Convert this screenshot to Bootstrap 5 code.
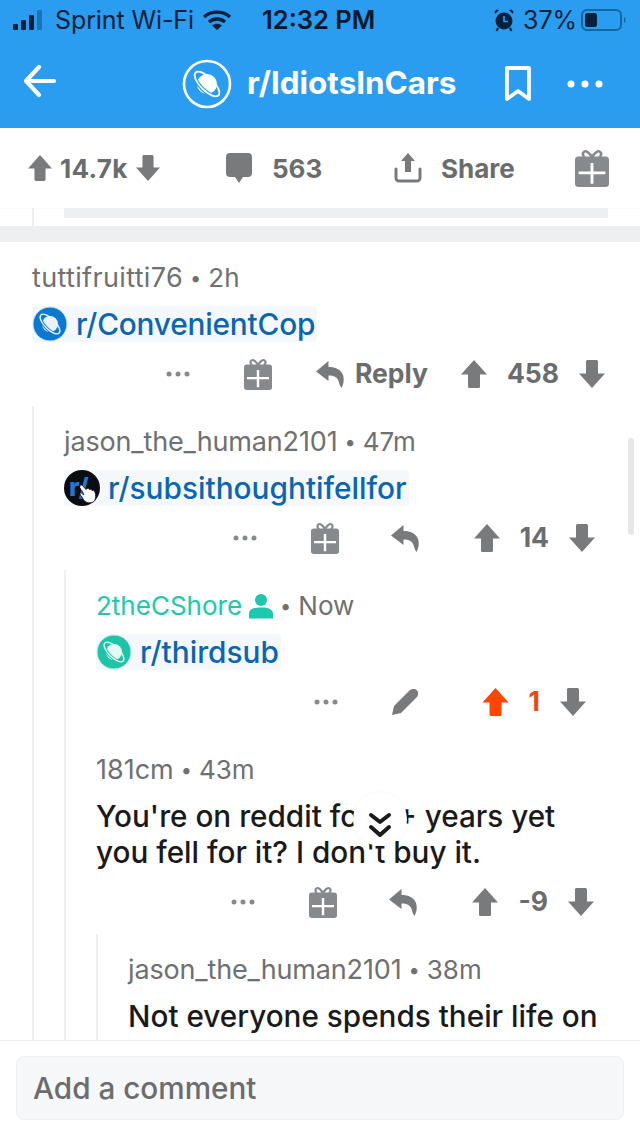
<!DOCTYPE html>
<html lang="en">
<head>
<meta charset="utf-8">
<title>r/IdiotsInCars</title>
<link href="https://cdn.jsdelivr.net/npm/bootstrap@5.3.0/dist/css/bootstrap.min.css" rel="stylesheet">
<style>
html,body{margin:0;height:1136px;overflow:hidden;background:#fff}
body{font-family:Inter,"Noto Sans",sans-serif;color:#1a1a1b}
.shell{width:640px;height:1136px;position:relative;overflow:hidden}
.hero{background:#2a9df0;height:128px;flex:none}
.status{height:40px;padding:0 0 0 13px;font-size:25px;color:#07213a;line-height:40px}
.status svg{flex:none}
.status .carrier{margin-left:8px;width:139px;white-space:nowrap;letter-spacing:-.1px}
.status .wifi{margin-left:8px}
.status .clock{font-weight:600;margin-left:30px;width:119px;white-space:nowrap;color:#04182c;font-size:25.5px}
.status .alarm{margin-left:113px}
.status .pct{margin-left:9px;white-space:nowrap;width:51px}
.status .batt{margin-left:7px}
.topnav{height:88px;color:#fff;position:relative}
.topnav svg{flex:none}
.topnav .back{margin-left:23px;margin-bottom:6px}
.topnav .subname{font-size:31.4px;font-weight:700;margin-left:15px;width:224px;white-space:nowrap}
.topnav .planet{margin-left:125px}
.topnav .bm{margin-left:34px}
.topnav .more{margin-left:36px}
.postbar{height:80px;flex:none;color:#6a6c6e;font-size:26px;font-weight:700;box-shadow:0 1px 1px rgba(0,0,0,.02)}
.postbar svg{flex:none}
.postbar .pb-score{width:69px;margin:0 7px 0 8px;white-space:nowrap;letter-spacing:.3px}
.postbar .pb-up{margin-left:28px}
.postbar .pb-cm{margin-left:66px}
.postbar .pb-num{margin-left:20px;width:50px}
.postbar .pb-sh{margin-left:72px}
.postbar .pb-txt{margin-left:19px;width:74px}
.postbar .pb-gift{margin-left:60px}
.scroller{flex:1 1 auto;overflow:hidden;min-height:0}
.stub{height:18px;margin-left:32px;border-left:2px solid #edeff1;padding-left:30px}
.stub-bar{height:10px;width:544px;background:#edeff1}
.sep{height:16px;background:#edeff1}
.meta{height:32px;line-height:32px;font-size:27px;color:#6e7071;white-space:nowrap;display:flex;align-items:center}
.meta .dot{margin:0 7px;font-size:20px}
.meta .tm{font-size:26px}
.meta .uname-j{letter-spacing:-.15px}
.meta .uname-t{letter-spacing:.35px}
.meta .op{color:#1cc9ac;font-size:26px}
.meta svg{margin-left:6px;flex:none}
.meta .dot.tight{margin-left:6px;margin-right:7px}
.sublink{display:inline-flex;align-items:center;height:36px;background:#f5f8fa;margin-top:12px;color:#0a66b2;font-size:29.8px;font-weight:500;padding-right:2px;white-space:nowrap;border-radius:3px;vertical-align:top}
.sublink.tight-name{letter-spacing:-.2px}
.sublink svg{margin-right:8px;flex:none}
.linkrow{height:40px}
.txt{font-size:29.7px;font-weight:500;line-height:36px;margin-top:12px;color:#1a1a1b;white-space:nowrap}
.acts{height:40px;display:flex;align-items:center;justify-content:flex-end;color:#6a6c6e;font-size:26.5px;font-weight:700;margin-top:20px}
.acts.close-up{margin-top:12px}
.acts svg{flex:none}
.acts .a-dots{margin-right:54px}
.acts .a-gift{margin-right:44px}
.acts .a-gift.wide{margin-right:52px}
.acts .a-reply{display:flex;align-items:center;gap:11px}
.acts .a-vote{display:flex;align-items:center;gap:20px;margin-left:55px}
.acts .a-vote.first{margin-left:33px}
.acts .a-vote.pen{margin-left:64px}
.acts .cnt{white-space:nowrap;text-align:center}
.acts .cnt.down{color:#ea4a12}
.r-1{padding-right:35px}
.r-2{padding-right:45px}
.r-3{padding-right:54px}
.r-4{padding-right:46px}
.lvl0{padding:20px 0 0 32px}
.nest{border-left:2px solid #edeff1;padding-left:30px;margin-top:12px;padding-top:20px}
.nest.n-1{margin-left:32px}
.sib{margin-top:32px}
.add-wrap{height:96px;flex:none;border-top:1px solid #edeff1;padding:15px 16px 16px;background:#fff}
.add-box{height:64px;background:#f6f7f8;border:1px solid #f0f1f2;border-radius:8px;font-size:29.7px;font-weight:500;color:#6a6c6e;line-height:62px;padding-left:16px}
.fab{position:absolute;left:353px;top:793px;width:54px;height:53px;border-radius:50%;background:#fff;box-shadow:0 0 6px rgba(0,0,0,.04);display:flex;align-items:center;justify-content:center;padding-top:10px}
.rail{position:absolute;left:628px;top:438px;width:6px;height:97px;border-radius:3px;background:#e6e7e8}
.pl-blue{--pf:#eaf3fb;--pb:#0a79cf}
.pl-teal{--pf:#e4f8f4;--pb:#1cc4a8}
.pl-nav{--pf:#fff;--pb:#2a9df0}
</style>
</head>
<body>
<svg width="0" height="0" class="position-absolute">
  <defs>
    <symbol id="up" viewBox="0 0 26 28"><path d="M13 0 26 14.500H19V26.500a1.500 1.500 0 0 1-1.500 1.500H8.500A1.500 1.500 0 0 1 7 26.500V14.500H0Z"/></symbol>
    <symbol id="down" viewBox="0 0 26 28"><path d="M13 28 0 13.500H7V1.500A1.500 1.500 0 0 1 8.500 0H17.500A1.500 1.500 0 0 1 19 1.500V13.500H26Z"/></symbol>
    <symbol id="gift" viewBox="0 0 28 34" preserveAspectRatio="none"><path fill="#878a8c" d="M3 6H25a3 3 0 0 1 3 3V31a3 3 0 0 1-3 3H3a3 3 0 0 1-3-3V9a3 3 0 0 1 3-3Z"/><path fill="none" stroke="#878a8c" stroke-width="2.200" d="M14 7C12 2 9 .5 7.500 1.500S6 5 8 7M14 7C16 2 19 .5 20.500 1.500S22 5 20 7"/><path fill="none" stroke="#fff" stroke-width="2.400" d="M14 12V31M3 21H25"/></symbol>
    <symbol id="reply" viewBox="0 0 28 28"><path d="M12.500 1 0 11.500 12.500 21V15.500C18 15.500 21.500 17 23 22.500 23.500 24.500 24 26 25.500 28 27.500 24 28.500 20 27 15 25 9.500 19.500 7 12.500 7Z"/></symbol>
    <symbol id="dots" viewBox="0 0 24 6"><circle cx="3" cy="3" r="2.500"/><circle cx="12" cy="3" r="2.500"/><circle cx="21" cy="3" r="2.500"/></symbol>
    <symbol id="planet" viewBox="0 0 36 36">
      <g transform="rotate(45 18 18)" fill="none">
        <path d="M3.500 18A14.500 6 0 0 1 32.500 18" stroke="var(--pf)" stroke-width="1.600"/>
        <circle cx="18" cy="18" r="9" fill="var(--pf)"/>
        <path d="M3.500 18A14.500 6 0 0 0 32.500 18" stroke="var(--pb)" stroke-width="3.600"/>
        <path d="M3.500 18A14.500 6 0 0 0 32.500 18" stroke="var(--pf)" stroke-width="1.600" stroke-linecap="round"/>
      </g>
    </symbol>
  </defs>
</svg>
<div class="shell d-flex flex-column">
  <header class="hero">
    <div class="status d-flex align-items-center">
      <svg width="34" height="22" viewBox="0 0 34 22"><rect x="0" y="15" width="5" height="6" rx="1" fill="#07213a"/><rect x="8" y="11" width="5" height="10" rx="1" fill="#07213a"/><rect x="16" y="6" width="5" height="15" rx="1" fill="#07213a"/><rect x="24" y="1" width="5" height="20" rx="1" fill="#1b74b8"/></svg>
      <span class="carrier">Sprint Wi-Fi</span>
      <svg class="wifi" width="30" height="22" viewBox="0 0 30 22" fill="none" stroke="#07213a" stroke-width="3.400"><path d="M2 8C9 1.500 21 1.500 28 8M7 13C11.500 9 18.500 9 23 13"/><path fill="#07213a" stroke="none" d="M15 21 10 16.500C13 14 17 14 20 16.500Z"/></svg>
      <span class="clock">12:32 PM</span>
      <svg class="alarm" width="20" height="24" viewBox="0 0 20 24"><circle cx="10" cy="13" r="8.500" fill="#07213a"/><path d="M10 8V13.500H14" stroke="#2a9df0" stroke-width="1.600" fill="none"/><path d="M1 6 5 2 2.500 1.500 .5 3.500ZM19 6 15 2 17.500 1.500 19.500 3.500Z" fill="#07213a"/><path d="M4 20 2.500 23M16 20 17.500 23" stroke="#07213a" stroke-width="2"/></svg>
      <span class="pct">37%</span>
      <svg class="batt" width="46" height="24" viewBox="0 0 46 24"><rect x="1" y="2" width="39" height="20" rx="5" fill="none" stroke="#17669f" stroke-width="2"/><rect x="4" y="5" width="12" height="14" rx="2.500" fill="#07213a"/><path d="M43 9C45 10 45 14 43 15Z" fill="#17669f"/></svg>
    </div>
    <nav class="topnav d-flex align-items-center">
      <svg class="back" width="34" height="34" viewBox="0 0 34 34" fill="none" stroke="#fff" stroke-width="4.200" stroke-linecap="round" stroke-linejoin="round"><path d="M16 3 3 17 16 31M4 17H31"/></svg>
      <svg class="planet pl-nav" width="50" height="50" viewBox="0 0 50 50"><circle cx="25" cy="25" r="23" fill="none" stroke="#fff" stroke-width="2.600"/><use href="#planet" x="5" y="5" width="40" height="40"/></svg>
      <span class="subname">r/IdiotsInCars</span>
      <svg class="bm" width="26" height="36" viewBox="0 0 26 36" fill="none" stroke="#fff" stroke-width="3.800" stroke-linejoin="round"><path d="M2 2H24V33L13 25 2 33Z"/></svg>
      <svg class="more" width="36" height="8" viewBox="0 0 36 8" fill="#fff"><circle cx="4" cy="4" r="3.500"/><circle cx="18" cy="4" r="3.500"/><circle cx="32" cy="4" r="3.500"/></svg>
    </nav>
  </header>

  <div class="postbar d-flex align-items-center">
    <svg class="pb-up" width="24" height="28" fill="#787a7c"><use href="#up"/></svg>
    <span class="pb-score">14.7k</span>
    <svg width="24" height="28" fill="#787a7c"><use href="#down"/></svg>
    <svg class="pb-cm" width="26" height="30" viewBox="0 0 26 30" fill="#787a7c"><path d="M4 0H22a4 4 0 0 1 4 4V20a4 4 0 0 1-4 4H17L13 30 9 24H4a4 4 0 0 1-4-4V4A4 4 0 0 1 4 0Z"/></svg>
    <span class="pb-num">563</span>
    <svg class="pb-sh" width="28" height="32" viewBox="0 0 28 32" fill="#787a7c"><path d="M14 1 21 9H17V20H11V9H7Z"/><path d="M2 17V26a3 3 0 0 0 3 3H23a3 3 0 0 0 3-3V17" fill="none" stroke="#787a7c" stroke-width="3" stroke-linecap="round"/></svg>
    <span class="pb-txt">Share</span>
    <svg class="pb-gift" width="34" height="37"><use href="#gift" width="34" height="37"/></svg>
  </div>

  <main class="scroller">
    <div class="stub"><div class="stub-bar"></div></div>
    <div class="sep"></div>

    <section class="lvl0">
      <div class="meta"><span class="uname-t">tuttifruitti76</span><span class="dot">•</span><span class="tm">2h</span></div>
      <div class="linkrow"><a class="sublink tight-name text-decoration-none"><svg class="pl-blue" width="36" height="36" viewBox="0 0 36 36"><circle cx="18" cy="18" r="17" fill="#0a79cf" stroke="#cfe6f5"/><use href="#planet" x="2" y="2" width="32" height="32"/></svg>r/ConvenientCop</a></div>
      <div class="acts r-1">
        <svg class="a-dots" width="24" height="6" fill="#878a8c"><use href="#dots"/></svg>
        <svg class="a-gift" width="28" height="31"><use href="#gift" width="28" height="31"/></svg>
        <span class="a-reply"><svg width="28" height="28" fill="#787a7c"><use href="#reply"/></svg>Reply</span>
        <span class="a-vote first"><svg width="26" height="28" fill="#787a7c"><use href="#up"/></svg><span class="cnt">458</span><svg width="26" height="28" fill="#787a7c"><use href="#down"/></svg></span>
      </div>
    </section>

    <section class="nest n-1">
      <div class="meta"><span class="uname-j">jason_the_human2101</span><span class="dot">•</span><span class="tm">47m</span></div>
      <div class="linkrow"><a class="sublink text-decoration-none"><svg width="36" height="36" viewBox="0 0 36 36"><circle cx="18" cy="18" r="18" fill="#0b0d12"/><text x="5" y="26" font-family="Inter,sans-serif" font-size="25" font-weight="800" fill="#1f78d8">r/</text><path d="M16 17C15 15.500 17 14 18.500 15.500L22 19.500 23 18.500C24 18 25 18.500 25.500 19.500 26.500 19 27.500 19.500 28 20.500 29 20 30.500 20.500 31 22 32 25 32 28 30.500 31 28.500 33 24.500 33.500 22 32 20 31 19 29 18 27 16.500 25.500 15.500 23.500 16.500 22.500 18 23 19 24.500 19.500 25 20 24.500 19 22.500 17.500 20 16 17Z" fill="#fff" stroke="#0b0d12" stroke-width=".8"/></svg>r/subsithoughtifellfor</a></div>
      <div class="acts r-2">
        <svg class="a-dots" width="24" height="6" fill="#878a8c"><use href="#dots"/></svg>
        <svg class="a-gift wide" width="28" height="31"><use href="#gift" width="28" height="31"/></svg>
        <span class="a-reply"><svg width="28" height="28" fill="#787a7c"><use href="#reply"/></svg></span>
        <span class="a-vote"><svg width="26" height="28" fill="#787a7c"><use href="#up"/></svg><span class="cnt">14</span><svg width="26" height="28" fill="#787a7c"><use href="#down"/></svg></span>
      </div>

      <section class="nest">
        <div class="meta"><span class="op">2theCShore</span><svg width="26" height="26" viewBox="0 0 28 27" fill="#1cc9ac"><circle cx="14" cy="7" r="6.500"/><path d="M1 27V22C1 17 6 15 14 15S27 17 27 22V27Z"/></svg><span class="dot tight">•</span><span class="tm">Now</span></div>
        <div class="linkrow"><a class="sublink text-decoration-none"><svg class="pl-teal" width="36" height="36" viewBox="0 0 36 36"><circle cx="18" cy="18" r="17" fill="#1cc4a8" stroke="#c9f1ea"/><use href="#planet" x="2" y="2" width="32" height="32"/></svg>r/thirdsub</a></div>
        <div class="acts r-3">
          <svg class="a-dots" width="24" height="6" fill="#878a8c"><use href="#dots"/></svg>
          <svg width="26" height="26" viewBox="0 0 26 26" fill="#787a7c"><path d="M0 26 2 17 17 2C19.500-.5 23-.5 25 1.500S26.500 6.500 24 9L9 24Z"/></svg>
          <span class="a-vote pen"><svg width="27" height="28" fill="#ff4500"><use href="#up"/></svg><span class="cnt down">1</span><svg width="26" height="28" fill="#787a7c"><use href="#down"/></svg></span>
        </div>

        <div class="sib">
          <div class="meta"><span>181cm</span><span class="dot">•</span><span class="tm">43m</span></div>
          <div class="txt">You're on reddit for 4+ years yet<br>you fell for it? I don't buy it.</div>
          <div class="acts close-up r-4">
            <svg class="a-dots" width="24" height="6" fill="#878a8c"><use href="#dots"/></svg>
            <svg class="a-gift wide" width="28" height="31"><use href="#gift" width="28" height="31"/></svg>
            <span class="a-reply"><svg width="28" height="28" fill="#787a7c"><use href="#reply"/></svg></span>
            <span class="a-vote"><svg width="26" height="28" fill="#787a7c"><use href="#up"/></svg><span class="cnt">-9</span><svg width="26" height="28" fill="#787a7c"><use href="#down"/></svg></span>
          </div>
        </div>

        <section class="nest pb-4">
          <div class="meta"><span class="uname-j">jason_the_human2101</span><span class="dot">•</span><span class="tm">38m</span></div>
          <div class="txt">Not everyone spends their life on</div>
        </section>
      </section>
    </section>
  </main>

  <footer class="add-wrap">
    <div class="add-box">Add a comment</div>
  </footer>

  <div class="fab"><svg width="24" height="26" viewBox="0 0 24 26" fill="none" stroke="#1a1a1b" stroke-width="4" stroke-linecap="round" stroke-linejoin="round"><path d="M3 3 12 10 21 3M3 15 12 23 21 15"/></svg></div>
  <div class="rail"></div>
</div>
<script src="https://cdn.jsdelivr.net/npm/bootstrap@5.3.0/dist/js/bootstrap.bundle.min.js"></script>
</body>
</html>
